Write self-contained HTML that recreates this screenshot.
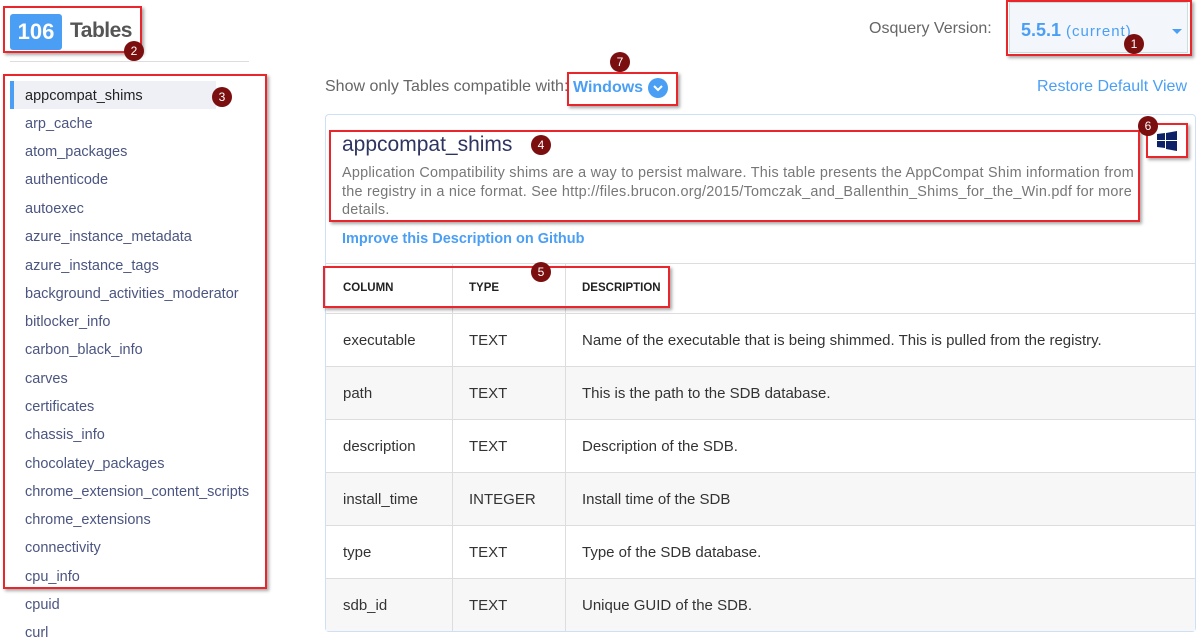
<!DOCTYPE html>
<html><head><style>
*{margin:0;padding:0;box-sizing:border-box}
body{width:1200px;height:643px;overflow:hidden;background:#fff;font-family:"Liberation Sans",sans-serif;position:relative}
.abs{position:absolute}
.red{position:absolute;border:2px solid #e8262b;box-shadow:2px 2px 3px rgba(0,0,0,.35)}
.num{position:absolute;width:20px;height:20px;border-radius:50%;background:#7b0e0e;color:#fff;font-size:12px;text-align:center;line-height:20px}
.side div{position:absolute;left:25px;font-size:14.5px;color:#4b5580}
.cell{position:absolute;font-size:15px;color:#333}
.hl{position:absolute;height:1px;background:#ddd;left:326px;width:869px}
.vl{position:absolute;width:1px;background:#ddd}
</style></head><body>
<div class="abs" style="left:10px;top:14px;width:52px;height:36px;background:#4a9ff5;border-radius:3px;color:#fff;font-weight:bold;font-size:22px;text-align:center;line-height:36px">106</div>
<div class="abs" style="left:70px;top:19px;font-size:21px;font-weight:bold;color:#555;letter-spacing:-0.5px">Tables</div>
<div class="red" style="left:3px;top:6px;width:139px;height:47px"></div>
<div class="num" style="left:124px;top:41px">2</div>
<div class="abs" style="left:10px;top:61px;width:239px;height:1px;background:#ddd"></div>

<div class="abs" style="left:10px;top:81px;width:206px;height:28px;background:#eef0f5;border-left:4px solid #4a9ff5"></div>
<div class="side">
<div style="top:88px;color:#222">appcompat_shims</div>
<div style="top:116px">arp_cache</div>
<div style="top:144px">atom_packages</div>
<div style="top:172px">authenticode</div>
<div style="top:201px">autoexec</div>
<div style="top:229px">azure_instance_metadata</div>
<div style="top:258px">azure_instance_tags</div>
<div style="top:286px">background_activities_moderator</div>
<div style="top:314px">bitlocker_info</div>
<div style="top:342px">carbon_black_info</div>
<div style="top:371px">carves</div>
<div style="top:399px">certificates</div>
<div style="top:427px">chassis_info</div>
<div style="top:456px">chocolatey_packages</div>
<div style="top:484px">chrome_extension_content_scripts</div>
<div style="top:512px">chrome_extensions</div>
<div style="top:540px">connectivity</div>
<div style="top:569px">cpu_info</div>
<div style="top:597px">cpuid</div>
<div style="top:625px">curl</div>
</div>
<div class="red" style="left:3px;top:74px;width:264px;height:515px"></div>
<div class="num" style="left:212px;top:87px">3</div>

<div class="abs" style="left:869px;top:20px;font-size:16px;color:#666">Osquery Version:</div>
<div class="abs" style="left:1009px;top:2px;width:179px;height:51px;background:#f3f6fb;border:1px solid #cdd"></div>
<div class="abs" style="left:1021px;top:20px;font-size:18px;font-weight:bold;color:#4a9ff5">5.5.1 <span style="font-weight:normal;font-size:15px;letter-spacing:1px">(current)</span></div>
<div class="abs" style="left:1172px;top:29px;width:0;height:0;border-left:5px solid transparent;border-right:5px solid transparent;border-top:5px solid #4a9ff5"></div>
<div class="red" style="left:1006px;top:0px;width:186px;height:56px"></div>
<div class="num" style="left:1124px;top:34px">1</div>

<div class="abs" style="left:325px;top:78px;font-size:16px;color:#666">Show only Tables compatible with:</div>
<div class="abs" style="left:573px;top:79px;font-size:16px;font-weight:bold;color:#4a9ff5">Windows</div>
<div class="abs" style="left:648px;top:78px;width:20px;height:20px;border-radius:50%;background:#4a9ff5"><svg width="20" height="20"><path d="M6 8l4 4 4-4" stroke="#fff" stroke-width="2" fill="none"/></svg></div>
<div class="red" style="left:567px;top:72px;width:111px;height:34px"></div>
<div class="num" style="left:610px;top:52px">7</div>
<div class="abs" style="left:1037px;top:78px;font-size:16px;color:#4a9ff5">Restore Default View</div>

<div class="abs" style="left:325px;top:114px;width:871px;height:518px;border:1px solid #cde0f5;border-radius:4px"></div>
<div class="abs" style="left:342px;top:133px;font-size:21px;color:#2e3560">appcompat_shims</div>
<div class="abs" style="left:342px;top:164px;width:820px;font-size:14.4px;line-height:18.5px;color:#777;white-space:nowrap;letter-spacing:0.25px">Application Compatibility shims are a way to persist malware. This table presents the AppCompat Shim information from<br>the registry in a nice format. See http://files.brucon.org/2015/Tomczak_and_Ballenthin_Shims_for_the_Win.pdf for more<br>details.</div>
<div class="red" style="left:329px;top:130px;width:811px;height:92px"></div>
<div class="num" style="left:531px;top:135px">4</div>
<svg class="abs" style="left:1157px;top:131px" width="20" height="20"><path d="M0 3l8-1v7H0zM9 2l11-2v9H9zM0 10h8v7l-8-1zM9 10h11v10l-11-2z" fill="#0d2166"/></svg>
<div class="red" style="left:1146px;top:123px;width:42px;height:35px"></div>
<div class="num" style="left:1138px;top:116px">6</div>
<div class="abs" style="left:342px;top:231px;font-size:14.5px;font-weight:bold;color:#4a9ff5">Improve this Description on Github</div>

<div class="hl" style="top:263px"></div>
<div class="abs" style="left:326px;top:366px;width:869px;height:53px;background:#f7f7f7"></div>
<div class="abs" style="left:326px;top:472px;width:869px;height:53px;background:#f7f7f7"></div>
<div class="abs" style="left:326px;top:578px;width:869px;height:53px;background:#f7f7f7"></div>
<div class="hl" style="top:313px"></div><div class="hl" style="top:366px"></div><div class="hl" style="top:419px"></div><div class="hl" style="top:472px"></div><div class="hl" style="top:525px"></div><div class="hl" style="top:578px"></div>
<div class="vl" style="left:452px;top:263px;height:368px"></div>
<div class="vl" style="left:565px;top:263px;height:368px"></div>
<div class="cell" style="left:343px;top:282px;font-size:11.5px;font-weight:bold;color:#222">COLUMN</div>
<div class="cell" style="left:469px;top:282px;font-size:11.5px;font-weight:bold;color:#222">TYPE</div>
<div class="cell" style="left:582px;top:282px;font-size:11.5px;font-weight:bold;color:#222">DESCRIPTION</div>
<div class="red" style="left:323px;top:266px;width:347px;height:42px"></div>
<div class="num" style="left:531px;top:262px">5</div>

<div class="cell" style="left:343px;top:332px">executable</div><div class="cell" style="left:469px;top:332px">TEXT</div><div class="cell" style="left:582px;top:332px">Name of the executable that is being shimmed. This is pulled from the registry.</div>
<div class="cell" style="left:343px;top:385px">path</div><div class="cell" style="left:469px;top:385px">TEXT</div><div class="cell" style="left:582px;top:385px">This is the path to the SDB database.</div>
<div class="cell" style="left:343px;top:438px">description</div><div class="cell" style="left:469px;top:438px">TEXT</div><div class="cell" style="left:582px;top:438px">Description of the SDB.</div>
<div class="cell" style="left:343px;top:491px">install_time</div><div class="cell" style="left:469px;top:491px">INTEGER</div><div class="cell" style="left:582px;top:491px">Install time of the SDB</div>
<div class="cell" style="left:343px;top:544px">type</div><div class="cell" style="left:469px;top:544px">TEXT</div><div class="cell" style="left:582px;top:544px">Type of the SDB database.</div>
<div class="cell" style="left:343px;top:597px">sdb_id</div><div class="cell" style="left:469px;top:597px">TEXT</div><div class="cell" style="left:582px;top:597px">Unique GUID of the SDB.</div>
</body></html>
